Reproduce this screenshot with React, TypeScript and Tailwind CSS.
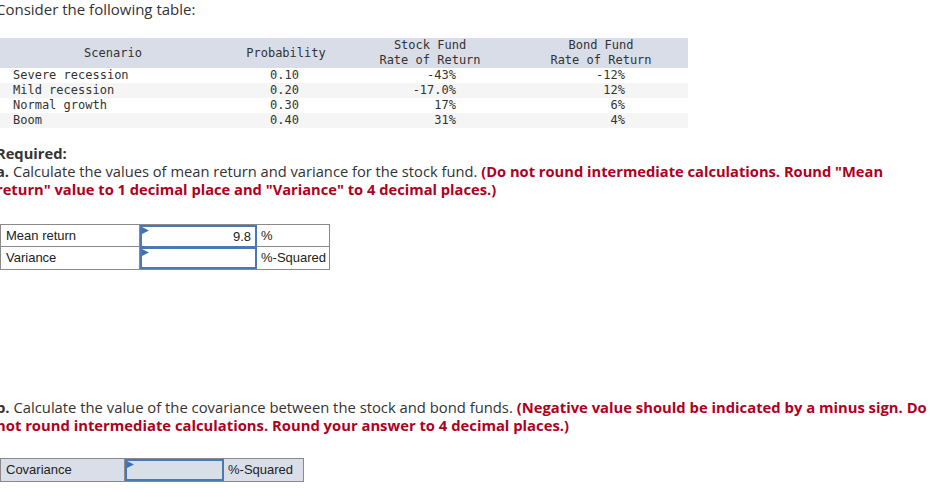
import React from "react";

const rows = [
  { s: "Severe recession", p: "0.10", st: "-43%", b: "-12%" },
  { s: "Mild recession", p: "0.20", st: "-17.0%", b: "12%" },
  { s: "Normal growth", p: "0.30", st: "17%", b: "6%" },
  { s: "Boom", p: "0.40", st: "31%", b: "4%" },
];

const Flag = () => (
  <svg className="absolute left-0 top-0" width="7" height="7" viewBox="0 0 7 7">
    <polygon points="0,0 7,3.5 0,7" fill="#3d72b8" />
  </svg>
);

const AnswerInput = ({ value, shaded }: { value?: string; shaded?: boolean }) => (
  <div
    className={`relative h-full border-2 border-[#4a78b5] px-1 text-right leading-[19px] ${
      shaded ? "bg-[#dadee9]" : "bg-white"
    }`}
  >
    <Flag />
    {value}
  </div>
);

export default function App() {
  return (
    <div className="w-[938px] h-[490px] overflow-hidden bg-white text-[#333]">
      {/* Intro */}
      <div className="-ml-[4px] font-['Open_Sans',sans-serif] text-[15px] leading-[18px]">
        Consider the following table:
      </div>

      {/* Data table */}
      <div className="mt-[20px] w-[688px] font-['DejaVu_Sans_Mono',monospace] text-[12px] leading-[15px] text-[#333]">
        <div className="grid grid-cols-[226px_120px_168px_174px] bg-[#d9dde8]">
          <div className="flex h-[30px] items-center justify-center">Scenario</div>
          <div className="flex h-[30px] items-center justify-center">Probability</div>
          <div className="text-center">
            Stock Fund
            <br />
            Rate of Return
          </div>
          <div className="text-center">
            Bond Fund
            <br />
            Rate of Return
          </div>
        </div>
        {rows.map((r, i) => (
          <div
            key={r.s}
            className={`grid grid-cols-[226px_120px_168px_174px] ${i % 2 ? "bg-[#f5f5f5]" : "bg-white"}`}
          >
            <div className="pl-[13px]">{r.s}</div>
            <div className="pl-[44px]">{r.p}</div>
            <div className="pr-[58px] text-right">{r.st}</div>
            <div className="pr-[63px] text-right">{r.b}</div>
          </div>
        ))}
      </div>

      {/* Part a */}
      <div className="-ml-[4px] mt-[16px] whitespace-nowrap font-['Open_Sans',sans-serif] text-[14.7px] leading-[18px]">
        <div className="font-bold">Required:</div>
        <div>
          <b>a.</b> Calculate the values of mean return and variance for the stock fund.{" "}
          <b className="text-[#b0001e]">(Do not round intermediate calculations. Round "Mean</b>
        </div>
        <div>
          <b className="text-[#b0001e]">return" value to 1 decimal place and "Variance" to 4 decimal places.)</b>
        </div>
      </div>

      <div className="mt-[26px] w-[330px] font-['Liberation_Sans',sans-serif] text-[13px] text-[#222]">
        <div className="grid h-[23px] grid-cols-[139px_117px_74px] border border-[#8a8a8a]">
          <div className="border-r border-[#8a8a8a] pl-[5px] leading-[21px]">Mean return</div>
          <AnswerInput value="9.8" />
          <div className="pl-[4px] leading-[21px]">%</div>
        </div>
        <div className="grid h-[23px] grid-cols-[139px_117px_74px] border border-t-0 border-[#8a8a8a]">
          <div className="border-r border-[#8a8a8a] pl-[5px] leading-[22px]">Variance</div>
          <AnswerInput />
          <div className="pl-[4px] leading-[22px]">%-Squared</div>
        </div>
      </div>

      {/* Part b */}
      <div className="-ml-[4px] mt-[128px] whitespace-nowrap font-['Open_Sans',sans-serif] text-[14.8px] leading-[18px]">
        <div>
          <b>b.</b> Calculate the value of the covariance between the stock and bond funds.{" "}
          <b className="text-[#b0001e]">(Negative value should be indicated by a minus sign. Do</b>
        </div>
        <div>
          <b className="text-[#b0001e]">not round intermediate calculations. Round your answer to 4 decimal places.)</b>
        </div>
      </div>

      <div className="mt-[24px] w-[304px] font-['Liberation_Sans',sans-serif] text-[13px] text-[#222]">
        <div className="grid h-[24px] grid-cols-[124px_99px_81px] border border-[#8a8a8a] bg-[#dadee9]">
          <div className="border-r border-[#8a8a8a] pl-[5px] leading-[22px]">Covariance</div>
          <AnswerInput shaded />
          <div className="pl-[4px] leading-[22px]">%-Squared</div>
        </div>
      </div>
    </div>
  );
}
